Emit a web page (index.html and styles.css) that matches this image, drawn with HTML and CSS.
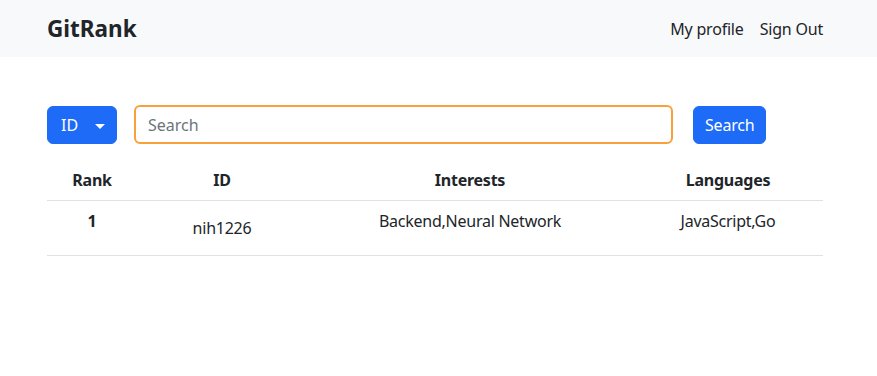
FILE: index.html
```html
<!DOCTYPE html>
<html lang="en">
<head>
  <meta charset="UTF-8">
  <meta name="viewport" content="width=device-width, initial-scale=1.0">
  <title>GitRank</title>
  <link rel="stylesheet" href="styles.css">
</head>
<body>

<nav class="navbar">
  <a class="brand" href="#">GitRank</a>
  <div class="nav-links">
    <a class="nav-link" href="#">My profile</a>
    <a class="nav-link" href="#">Sign Out</a>
  </div>
</nav>

<div class="container">
  <form class="search-row">
    <button type="button" class="btn btn-primary dropdown-toggle">ID</button>
    <input class="search-input" type="text" placeholder="Search">
    <button type="submit" class="btn btn-primary btn-search">Search</button>
  </form>

  <table class="rank-table">
    <thead>
      <tr>
        <th class="col-rank">Rank</th>
        <th class="col-id">ID</th>
        <th class="col-interests">Interests</th>
        <th class="col-lang">Languages</th>
      </tr>
    </thead>
    <tbody>
      <tr>
        <th>1</th>
        <td><a class="btn btn-link" href="#">nih1226</a></td>
        <td>Backend,Neural Network</td>
        <td>JavaScript,Go</td>
      </tr>
    </tbody>
  </table>
</div>

</body>
</html>
```

FILE: styles.css
```css
body {
  margin: 0;
  font-family: "Noto Sans", "Open Sans", sans-serif;
  font-size: 16px;
  line-height: 1.5;
  color: #212529;
  background-color: #fff;
}
a {
  text-decoration: none;
  color: inherit;
}

.navbar {
  background-color: #f8f9fa;
  height: 57px;
  padding: 0 54px 0 47px;
  display: flex;
  align-items: center;
  justify-content: space-between;
}
.brand {
  font-size: 22.5px;
  font-weight: 700;
  color: #212529;
}
.nav-links {
  display: flex;
  gap: 16px;
}
.nav-link {
  color: #212529;
  letter-spacing: -0.2px;
}

.container {
  padding: 48px 54px 0 47px;
}

.search-row {
  display: flex;
  align-items: center;
  margin-bottom: 16px;
}
.btn {
  display: inline-block;
  font-family: inherit;
  font-size: 16px;
  line-height: 24px;
  padding: 6px 12px;
  border: 1px solid transparent;
  border-radius: 6px;
  cursor: pointer;
}
.btn-primary {
  background-color: #1d6bf7;
  border-color: #1d6bf7;
  color: #fff;
}
.btn-search {
  padding: 6px 11px;
  letter-spacing: -0.2px;
}
.dropdown-toggle {
  width: 70px;
  text-align: left;
  padding-left: 13px;
  position: relative;
}
.dropdown-toggle::after {
  content: "";
  position: absolute;
  right: 11px;
  top: 17px;
  border-top: 5px solid #fff;
  border-left: 5px solid transparent;
  border-right: 5px solid transparent;
}
.search-input {
  width: 539px;
  height: 39px;
  box-sizing: border-box;
  margin: 0 20px 0 17px;
  padding: 6px 12px;
  font-family: inherit;
  font-size: 16px;
  color: #212529;
  border: 2px solid #f9a03a;
  border-radius: 6px;
  outline: none;
}
.search-input::placeholder {
  color: #6c757d;
}

.rank-table {
  width: 776px;
  border-collapse: collapse;
  text-align: center;
  letter-spacing: -0.25px;
}
.rank-table th,
.rank-table td {
  box-sizing: border-box;
  padding: 8px;
  border-bottom: 1px solid #dee2e6;
  vertical-align: top;
}
.col-rank { width: 90px; }
.col-id { width: 170px; }
.col-interests { width: 326px; }
.col-lang { width: 190px; }
.btn-link {
  color: #212529;
  padding: 6px 12px;
}
```
